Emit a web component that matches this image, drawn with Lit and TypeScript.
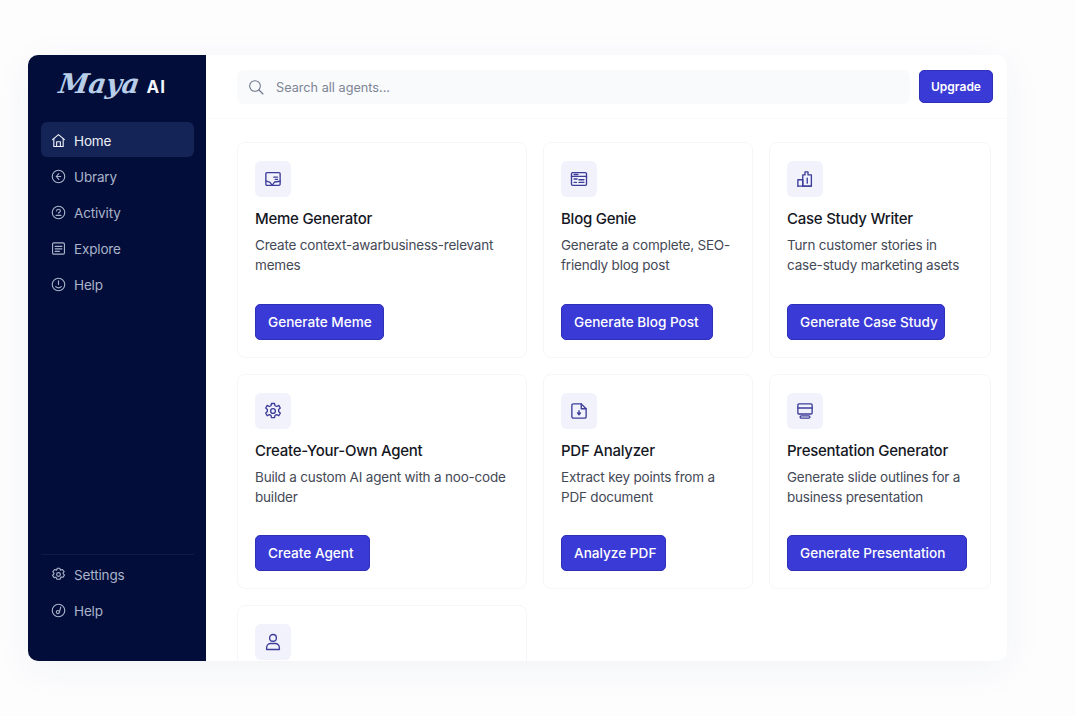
import { LitElement, html, svg, css } from 'lit';
import { customElement } from 'lit/decorators.js';

const icons: Record<string, unknown> = {
  home: svg`<path d="M2.500 10.500 12 2.500l9.500 8"/><path d="M4.500 9v12.500h15V9"/><path d="M9 21.500V14h6v7.500"/>`,
  library: svg`<circle cx="12" cy="12" r="10"/><path d="M12.500 7.500 8.500 12l4 4.500"/><path d="M8.500 12h7"/>`,
  activity: svg`<circle cx="12" cy="12" r="10"/><path d="M9 9.500c0-3.500 6-3.500 6 0 0 2-2.500 2.500-3 3.500"/><path d="M8 16.500h8"/>`,
  explore: svg`<rect x="2.500" y="3" width="19" height="18" rx="2"/><path d="M6.500 8.500h11M6.500 12.500h11M6.500 16.500h7"/>`,
  help: svg`<circle cx="12" cy="12" r="10"/><path d="M12 6v6"/><path d="M7.500 15.500c2.500 2.200 6.500 2.200 9 0"/>`,
  settings: svg`<circle cx="12" cy="12" r="3"/><path d="M10 2h4l1 3 3.200-1L21 7.500l-2 2.500 2.500 3-2.500 3.500-3-.5-1.500 3.500h-5L8 16.500l-3 .5L2.500 13.500 5 10.500 3 7.500 5.800 4 9 5z"/>`,
  help2: svg`<circle cx="12" cy="12" r="10"/><path d="M15.500 6.500 13.500 14.500"/><circle cx="11" cy="14.500" r="2.500"/>`,
  search: svg`<circle cx="10.500" cy="10.500" r="8"/><path d="m16.500 16.500 6 6"/>`,
  meme: svg`<rect x="2.500" y="3.500" width="19" height="17" rx="1.500"/><path d="M2.500 14.500l5.500 2 3 4"/><path d="M11 20.500l3-4.500 7.500-1"/><path d="M13 9.500h5M15 12.500h3"/>`,
  blog: svg`<rect x="2" y="3.500" width="20" height="17" rx="1.500"/><path d="M2 8.500h20"/><path d="M5.500 6h5M5.500 12h4M5.500 16.500h3M12 13h6.500M12 16.500h6.500"/>`,
  chart: svg`<path d="M2.500 21.500V13h6.500v8.500"/><path d="M9 21.500V6.500h3V2.500h4v4h4.500v15z"/><path d="M2.500 21.500h18"/><path d="M15 11v6.500"/>`,
  gear: svg`<circle cx="12" cy="12" r="3.200"/><path d="M10 2h4l.7 3 2.300 1 2.700-1.500 2 3.500-2.200 2v2.800l2.200 2-2 3.500-2.700-1.500-2.300 1-.7 3h-4l-.7-3-2.300-1-2.700 1.500-2-3.500 2.200-2V10l-2.200-2 2-3.500L7 6l2.300-1z"/>`,
  pdf: svg`<path d="M2.500 4.500a2 2 0 0 1 2-2H15l6.500 6.500v10.500a2 2 0 0 1-2 2h-15a2 2 0 0 1-2-2z"/><path d="M15 2.500V9h6.500"/><path d="M12 11.500v5M10 14.500l2 2.500 2-2.500"/>`,
  slides: svg`<rect x="2.500" y="2.500" width="19" height="13.500" rx="1.500"/><path d="M2.500 8h19"/><rect x="5.500" y="18.500" width="13" height="3" rx="1.500"/>`,
  user: svg`<circle cx="12" cy="6.500" r="4.500"/><path d="M3.500 22v-2.500a5.500 5.500 0 0 1 5.500-5.500h6a5.500 5.500 0 0 1 5.500 5.500V22z"/>`,
};

function icon(name: string) {
  return html`<svg viewBox="0 0 24 24" fill="none" stroke="currentColor" stroke-width="2" stroke-linecap="round" stroke-linejoin="round">${icons[name]}</svg>`;
}

const NAV = [
  { icon: 'home', label: 'Home', active: true },
  { icon: 'library', label: 'Ubrary' },
  { icon: 'activity', label: 'Activity' },
  { icon: 'explore', label: 'Explore' },
  { icon: 'help', label: 'Help' },
];

const FOOT_NAV = [
  { icon: 'settings', label: 'Settings' },
  { icon: 'help2', label: 'Help' },
];

const AGENTS = [
  { icon: 'meme', title: 'Meme Generator', desc: 'Create context-awarbusiness-relevant memes', action: 'Generate Meme', width: 129 },
  { icon: 'blog', title: 'Blog Genie', desc: 'Generate a complete, SEO-friendly blog post', action: 'Generate Blog Post', width: 152 },
  { icon: 'chart', title: 'Case Study Writer', desc: 'Turn customer stories in case-study marketing asets', action: 'Generate Case Study', width: 158 },
  { icon: 'gear', title: 'Create-Your-Own Agent', desc: 'Build a custom AI agent with a noo-code builder', action: 'Create Agent', width: 115 },
  { icon: 'pdf', title: 'PDF Analyzer', desc: 'Extract key points from a PDF document', action: 'Analyze PDF', width: 105 },
  { icon: 'slides', title: 'Presentation Generator', desc: 'Generate slide outlines for a business presentation', action: 'Generate Presentation', width: 180 },
];

@customElement('app-root')
export class AppRoot extends LitElement {
  static styles = css`
    :host {
      display: block;
      height: 716px;
      box-sizing: border-box;
      padding: 55px 68px 55px 28px;
      background: #fdfdfe;
      font-family: Inter, "Liberation Sans", sans-serif;
    }
    .shell {
      display: flex;
      height: 606px;
      border-radius: 10px;
      overflow: hidden;
      background: #fff;
      box-shadow: 0 8px 40px rgba(40, 50, 110, 0.05);
    }
    .sidebar {
      flex: 0 0 178px;
      display: flex;
      flex-direction: column;
      box-sizing: border-box;
      padding: 0 12px 34px 13px;
      background: #020d3a;
    }
    .logo {
      display: flex;
      align-items: baseline;
      gap: 7px;
      height: 67px;
      padding: 11px 0 0 18px;
      box-sizing: border-box;
      white-space: nowrap;
    }
    .logo .script {
      font-family: "DejaVu Serif", serif;
      font-style: italic;
      font-weight: 700;
      font-size: 27px;
      line-height: 36px;
      color: #b7cde8;
      transform: skewX(-8deg);
    }
    .logo .ai {
      font-weight: 700;
      font-size: 17px;
      color: #f2f5fb;
      letter-spacing: 1px;
    }
    nav {
      display: flex;
      flex-direction: column;
      gap: 1px;
    }
    .foot {
      margin-top: auto;
      padding-top: 1px;
      border-top: 1px solid #0e1a48;
    }
    .item {
      display: flex;
      align-items: center;
      gap: 8px;
      height: 35px;
      box-sizing: border-box;
      padding: 2px 9px 0 10px;
      border-radius: 6px;
      font-size: 13.500px;
      letter-spacing: -0.15px;
      color: #aab3c9;
    }
    .item svg {
      width: 15px;
      height: 15px;
      stroke-width: 1.800;
    }
    .item.active {
      background: #142457;
      color: #eef1f8;
    }
    .main {
      flex: 1;
      min-width: 0;
      display: flex;
      flex-direction: column;
    }
    .topbar {
      display: flex;
      gap: 9px;
      padding: 15px 14px 14px 31px;
      border-bottom: 1px solid #fafafc;
    }
    .search {
      flex: 1;
      display: flex;
      align-items: center;
      gap: 12px;
      height: 34px;
      padding: 0 11px;
      border-radius: 7px;
      background: #f9fafb;
      font-size: 12.700px;
      color: #7d8597;
    }
    .search svg {
      width: 16px;
      height: 16px;
      color: #69738a;
      stroke-width: 1.600;
    }
    .upgrade {
      flex: 0 0 74px;
      height: 33px;
      padding: 0;
      border: 1px solid #2f2fb8;
      border-radius: 5px;
      background: #3a3ad6;
      color: #fff;
      font: 600 12px Inter, "Liberation Sans", sans-serif;
    }
    .content {
      flex: 1;
      min-height: 0;
      overflow: hidden;
      display: grid;
      grid-template-columns: 290px 210px 222px;
      grid-auto-rows: 215.500px;
      gap: 16px;
      padding: 23px 16px 0 31px;
    }
    .card {
      display: flex;
      flex-direction: column;
      align-items: flex-start;
      box-sizing: border-box;
      padding: 18px 14px 17px 17px;
      border: 1px solid #f6f6f9;
      border-radius: 8px;
      background: #fff;
    }
    .badge {
      display: flex;
      align-items: center;
      justify-content: center;
      width: 36px;
      height: 36px;
      border-radius: 6px;
      background: #f1f2fb;
      color: #3e3e9a;
    }
    .badge svg {
      width: 18px;
      height: 18px;
      stroke-width: 1.800;
    }
    h3 {
      margin: 12px 0 0;
      font-size: 15px;
      line-height: 20px;
      font-weight: 500;
      letter-spacing: -0.25px;
      color: #15171f;
    }
    p {
      margin: 6px 0 0;
      font-size: 13.500px;
      line-height: 20px;
      letter-spacing: -0.2px;
      color: #444956;
    }
    .action {
      margin-top: auto;
      height: 36px;
      padding: 0 0 0 12px;
      text-align: left;
      border: 1px solid #2f2fb8;
      border-radius: 5px;
      background: #3a3ad6;
      color: #fff;
      font: 500 13.600px Inter, "Liberation Sans", sans-serif;
      white-space: nowrap;
    }
  `;

  private renderItem(item: { icon: string; label: string; active?: boolean }) {
    return html`<div class="item ${item.active ? 'active' : ''}">${icon(item.icon)}<span>${item.label}</span></div>`;
  }

  render() {
    return html`
      <div class="shell">
        <aside class="sidebar">
          <div class="logo"><span class="script">Maya</span><span class="ai">AI</span></div>
          <nav>${NAV.map(i => this.renderItem(i))}</nav>
          <nav class="foot">${FOOT_NAV.map(i => this.renderItem(i))}</nav>
        </aside>
        <div class="main">
          <header class="topbar">
            <div class="search">${icon('search')}<span>Search all agents...</span></div>
            <button class="upgrade">Upgrade</button>
          </header>
          <section class="content">
            ${AGENTS.map(a => html`
              <article class="card">
                <div class="badge">${icon(a.icon)}</div>
                <h3>${a.title}</h3>
                <p>${a.desc}</p>
                <button class="action" style="width: ${a.width}px">${a.action}</button>
              </article>
            `)}
            <article class="card"><div class="badge">${icon('user')}</div></article>
          </section>
        </div>
      </div>
    `;
  }
}
